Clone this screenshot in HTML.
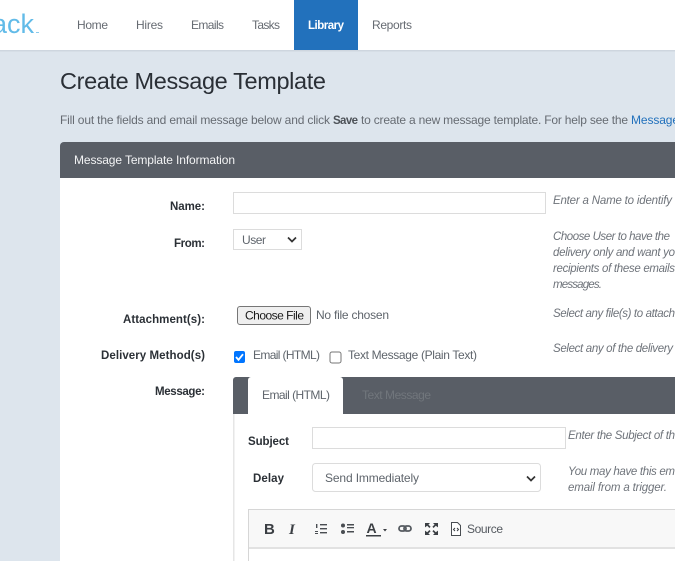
<!DOCTYPE html>
<html lang="en">
<head>
<meta charset="utf-8">
<title>Create Message Template</title>
<style>
html,body{margin:0;padding:0;width:675px;height:561px;overflow:hidden;background:#dde5ed}
svg{display:block;position:absolute;left:0;top:0}
text{font-family:"Liberation Sans",sans-serif;font-size:12px;fill:#666b72}
.lab{font-weight:bold;fill:#2b3036;font-size:11.5px}
.hint{font-style:italic;fill:#6e737a;font-size:11.5px}
.nav{fill:#666b72;font-size:12px}
.tx{fill:#5f656c}
</style>
</head>
<body>
<svg width="675" height="561" viewBox="0 0 675 561" xmlns="http://www.w3.org/2000/svg">
<rect x="0" y="0" width="675" height="50" fill="#fff"/>
<rect x="0" y="50" width="675" height="1.5" fill="#ced6df"/>
<rect x="294" y="0" width="64" height="50" fill="#2271bc"/>
<text x="-8" y="33" textLength="42" lengthAdjust="spacing" style="font-size:27px;fill:#62bbe8">ack</text>
<rect x="36" y="32" width="3" height="1" fill="#8ccbec"/>
<text class="nav" x="77" y="29" textLength="31" lengthAdjust="spacing">Home</text>
<text class="nav" x="136" y="29" textLength="27" lengthAdjust="spacing">Hires</text>
<text class="nav" x="191" y="29" textLength="33" lengthAdjust="spacing">Emails</text>
<text class="nav" x="252" y="29" textLength="28" lengthAdjust="spacing">Tasks</text>
<text class="nav" x="308" y="29" textLength="36" lengthAdjust="spacing" style="fill:#fff;font-weight:bold;font-size:11.5px">Library</text>
<text class="nav" x="372" y="29" textLength="40" lengthAdjust="spacing">Reports</text>

<text x="60" y="89" textLength="266" lengthAdjust="spacing" style="font-size:23.5px;fill:#2a2f36">Create Message Template</text>
<text x="60" y="124" textLength="270" lengthAdjust="spacing">Fill out the fields and email message below and click</text>
<text x="333" y="124" textLength="25" lengthAdjust="spacing" style="font-weight:bold;fill:#4d5258;font-size:11.5px">Save</text>
<text x="361" y="124" textLength="267" lengthAdjust="spacing">to create a new message template. For help see the</text>
<text x="631" y="124" textLength="48" lengthAdjust="spacing" style="fill:#2271bc">Message</text>

<path d="M60 178V146a4 4 0 0 1 4-4H675V178Z" fill="#595e66"/>
<rect x="60" y="178" width="615" height="383" fill="#fff"/>
<text x="74" y="164" textLength="161" lengthAdjust="spacing" style="fill:#f2f3f4">Message Template Information</text>

<text class="lab" x="170" y="210" textLength="35" lengthAdjust="spacing">Name:</text>
<rect x="233.5" y="192.5" width="312" height="21" fill="#fff" stroke="#dcdcdc"/>
<text class="hint" x="553" y="204" textLength="119" lengthAdjust="spacing">Enter a Name to identify</text>

<text class="lab" x="174" y="247" textLength="31" lengthAdjust="spacing">From:</text>
<rect x="233.5" y="229.5" width="68" height="20" fill="#fff" stroke="#dcdcdc"/>
<text class="tx" x="242" y="244" textLength="24" lengthAdjust="spacing">User</text>
<path d="M288 237.5l4 4 4-4" fill="none" stroke="#333" stroke-width="1.7"/>
<text class="hint" x="553" y="240" textLength="117" lengthAdjust="spacing">Choose User to have the</text>
<text class="hint" x="553" y="256" textLength="122" lengthAdjust="spacing">delivery only and want yo</text>
<text class="hint" x="553" y="272" textLength="122" lengthAdjust="spacing">recipients of these emails</text>
<text class="hint" x="553" y="288" textLength="49" lengthAdjust="spacing">messages.</text>

<text class="lab" x="123" y="323" textLength="82" lengthAdjust="spacing">Attachment(s):</text>
<rect x="237.5" y="306.5" width="73" height="18" rx="2.5" fill="#efefef" stroke="#767676"/>
<text x="245" y="319.5" textLength="59" lengthAdjust="spacing" style="fill:#1a1a1a;font-size:12px">Choose File</text>
<text class="tx" x="316" y="319" textLength="73" lengthAdjust="spacing">No file chosen</text>
<text class="hint" x="553" y="317" textLength="122" lengthAdjust="spacing">Select any file(s) to attach</text>

<text class="lab" x="101" y="359" textLength="104" lengthAdjust="spacing">Delivery Method(s)</text>
<rect x="234" y="351" width="11" height="12" rx="2" fill="#0075ff"/>
<path d="M236 357l2.5 2.8 4.5-5.6" fill="none" stroke="#fff" stroke-width="1.8"/>
<text class="tx" x="253" y="359" textLength="67" lengthAdjust="spacing">Email (HTML)</text>
<rect x="330" y="352" width="11" height="11" rx="2" fill="#fff" stroke="#767676"/>
<text class="tx" x="348" y="359" textLength="129" lengthAdjust="spacing">Text Message (Plain Text)</text>
<text class="hint" x="553" y="352" textLength="120" lengthAdjust="spacing">Select any of the delivery</text>

<text class="lab" x="155" y="395" textLength="50" lengthAdjust="spacing">Message:</text>
<path d="M233 414V380a3 3 0 0 1 3-3H675V414Z" fill="#595e66"/>
<path d="M248 414V380a3 3 0 0 1 3-3H340a3 3 0 0 1 3 3V414Z" fill="#fff"/>
<rect x="233" y="414" width="1.5" height="147" fill="#e6e6e6"/>
<text class="tx" x="262" y="399" textLength="68" lengthAdjust="spacing">Email (HTML)</text>
<text x="362" y="399" textLength="69" lengthAdjust="spacing" style="fill:#71767c">Text Message</text>

<text class="lab" x="248" y="445" textLength="41" lengthAdjust="spacing">Subject</text>
<rect x="312.5" y="427.5" width="253" height="21" fill="#fff" stroke="#dcdcdc"/>
<text class="hint" x="568" y="439" textLength="107" lengthAdjust="spacing">Enter the Subject of th</text>

<text class="lab" x="253" y="482" textLength="31" lengthAdjust="spacing">Delay</text>
<rect x="312.5" y="463.5" width="228" height="28" rx="3" fill="#fff" stroke="#dcdcdc"/>
<text class="tx" x="325" y="482" textLength="94" lengthAdjust="spacing">Send Immediately</text>
<path d="M527 476.5l4 4 4-4" fill="none" stroke="#333" stroke-width="1.7"/>
<text class="hint" x="568" y="475" textLength="107" lengthAdjust="spacing">You may have this em</text>
<text class="hint" x="568" y="491" textLength="99" lengthAdjust="spacing">email from a trigger.</text>

<rect x="248" y="509" width="427" height="39" fill="#f8f8f8"/>
<rect x="248" y="509" width="427" height="1" fill="#d6d6d6"/>
<rect x="248" y="547" width="427" height="2" fill="#e2e2e2"/>
<rect x="248" y="509" width="1" height="52" fill="#d6d6d6"/>
<text x="264" y="534" style="font-size:15px;font-weight:bold;fill:#3b3f44">B</text>
<text x="289" y="534" style="font-size:15px;font-weight:bold;font-style:italic;font-family:'Liberation Serif',serif;fill:#3b3f44">I</text>
<g fill="#494d52">
<rect x="320" y="524" width="7" height="1.4"/><rect x="320" y="528" width="7" height="1.4"/><rect x="320" y="532" width="7" height="1.4"/>
<rect x="316" y="524" width="1.4" height="4"/><rect x="315" y="531" width="3" height="1"/><rect x="315" y="533" width="3" height="1"/>
<circle cx="343" cy="525.5" r="2"/><circle cx="343" cy="532" r="2"/>
<rect x="347" y="524" width="7" height="1.5"/><rect x="347" y="527" width="7" height="1.3"/><rect x="347" y="531" width="7" height="1.5"/>
</g>
<text x="366.5" y="533" style="font-size:14px;font-weight:bold;fill:#3b3f44">A</text>
<rect x="366" y="535" width="15" height="1.5" fill="#3b3f44"/>
<path d="M383 529h4l-2 2.5Z" fill="#3b3f44"/>
<g fill="none" stroke="#555a60">
<rect x="399" y="526" width="7" height="5" rx="2.5" stroke-width="1.8"/>
<rect x="404" y="526" width="7" height="5" rx="2.5" stroke-width="1.8"/>
</g>
<g fill="#3b3f44">
<path d="M425 523h5l-1.6 1.6 2.2 2.2-1.2 1.2-2.2-2.2-2.2 1.6Z"/>
<path d="M438 523h-5l1.6 1.6-2.2 2.2 1.2 1.2 2.2-2.2 2.2 1.6Z"/>
<path d="M425 535h5l-1.6-1.6 2.2-2.2-1.2-1.2-2.2 2.2-2.2-1.6Z"/>
<path d="M438 535h-5l1.6-1.6-2.2-2.2 1.2-1.2 2.2 2.2 2.2-1.6Z"/>
</g>
<path d="M451.5 522.5h6l3 3v10h-9Z" fill="#fff" stroke="#494d52"/>
<path d="M455 528l-1.5 1.5 1.5 1.5M457 528l1.5 1.5-1.5 1.5" fill="none" stroke="#3b3f44"/>
<text x="467" y="533" textLength="36" lengthAdjust="spacing" style="fill:#555a60;font-size:12px">Source</text>
</svg>
</body>
</html>
